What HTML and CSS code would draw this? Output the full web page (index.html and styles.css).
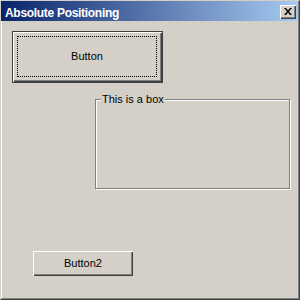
FILE: index.html
```html
<!DOCTYPE html>
<html>
<head>
<meta charset="utf-8">
<link rel="stylesheet" href="styles.css">
</head>
<body>
<div class="window">
  <div class="titlebar">
    <span class="title">Absolute Positioning</span>
    <span class="close">
      <svg width="8" height="7" viewBox="0 0 8 7"><path d="M0 0h2l2 2.5 2-2.5h2l-3 3.5 3 3.5h-2l-2-2.5-2 2.5h-2l3-3.5z" fill="#000"/></svg>
    </span>
  </div>
  <div class="client">
    <div class="btn btn-default"><span class="focus">Button</span></div>
    <div class="group">
      <span class="legend">This is a box</span>
    </div>
    <div class="btn btn-plain">Button2</div>
  </div>
</div>
</body>
</html>
```
FILE: styles.css
```css
html, body {
  margin: 0;
  padding: 0;
  background: #d4d0c8;
}
.window {
  width: 300px;
  height: 300px;
  box-sizing: border-box;
  border-style: solid;
  border-width: 1px;
  border-color: #d4d0c8 #404040 #404040 #d4d0c8;
  background: #d4d0c8;
  display: flex;
  flex-direction: column;
  font-family: "Liberation Sans", Arial, sans-serif;
  font-size: 11px;
  color: #000;
}
.titlebar {
  height: 20px;
  flex: none;
  display: flex;
  align-items: flex-start;
  justify-content: space-between;
  background: linear-gradient(to right, #0a246a, #a6caf0);
  border-right: 1px solid #808080;
  padding: 0 2px 0 4px;
}
.title {
  color: #fff;
  font-weight: bold;
  font-size: 12px;
  line-height: 14px;
  letter-spacing: -0.3px;
  margin-top: 5px;
}
.close {
  width: 16px;
  height: 14px;
  margin-top: 4px;
  box-sizing: border-box;
  background: #d4d0c8;
  box-shadow: inset 1px 1px 0 #fff, inset -1px -1px 0 #404040, inset -2px -2px 0 #808080;
  display: flex;
  align-items: center;
  justify-content: center;
  padding-bottom: 1px;
}
.close svg {
  display: block;
}
.client {
  flex: 1;
  border-left: 1px solid #fff;
  border-right: 1px solid #808080;
  border-bottom: 1px solid #808080;
  display: flex;
  flex-direction: column;
  align-items: flex-start;
}
.btn {
  box-sizing: border-box;
  background: #d4d0c8;
  display: flex;
  align-items: center;
  justify-content: center;
  line-height: 13px;
}
.btn-default {
  width: 151px;
  height: 52px;
  margin: 10px 0 0 10px;
  border: 1px solid #404040;
  box-shadow: inset 1px 1px 0 #fff, inset -1px -1px 0 #404040, inset -2px -2px 0 #808080;
  padding: 4px 5px 5px 4px;
}
.focus {
  flex: 1;
  align-self: stretch;
  border: 1px dotted #000;
  display: flex;
  align-items: center;
  justify-content: center;
}
.btn-plain {
  width: 100px;
  height: 25px;
  margin: 62px 0 0 31px;
  box-shadow: inset 1px 1px 0 #fff, inset -1px -1px 0 #404040, inset -2px -2px 0 #808080;
  padding-bottom: 1px;
}
.group {
  position: relative;
  width: 195px;
  height: 90px;
  box-sizing: border-box;
  margin: 16px 0 0 93px;
  border: 1px solid #808080;
  box-shadow: 1px 1px 0 #fff, inset 1px 1px 0 #fff;
}
.legend {
  position: absolute;
  left: 5px;
  top: -7px;
  padding: 0 1px;
  background: #d4d0c8;
  line-height: 13px;
  white-space: nowrap;
}
```
